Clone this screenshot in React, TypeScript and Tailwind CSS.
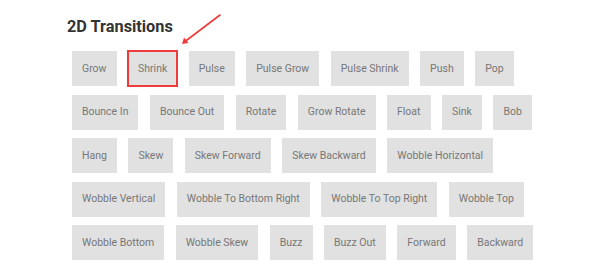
const rows: string[][] = [
  ["Grow", "Shrink", "Pulse", "Pulse Grow", "Pulse Shrink", "Push", "Pop"],
  ["Bounce In", "Bounce Out", "Rotate", "Grow Rotate", "Float", "Sink", "Bob"],
  ["Hang", "Skew", "Skew Forward", "Skew Backward", "Wobble Horizontal"],
  ["Wobble Vertical", "Wobble To Bottom Right", "Wobble To Top Right", "Wobble Top"],
  ["Wobble Bottom", "Wobble Skew", "Buzz", "Buzz Out", "Forward", "Backward"],
];

function Arrow() {
  return (
    <svg className="absolute left-[178px] top-[12px]" width="46" height="36" viewBox="0 0 46 36">
      <line x1="42" y1="3" x2="7" y2="29.5" stroke="#f03a3a" strokeWidth="1.6" strokeLinecap="round" />
      <path d="M4 32 L6 25.5 L10.5 31 Z" fill="#f03a3a" />
    </svg>
  );
}

export default function App() {
  return (
    <div className="relative h-[279px] w-[610px] overflow-hidden bg-white font-['Roboto',sans-serif]">
      <Arrow />
      <h2 className="pl-[67px] pt-[17px] text-[16.3px] font-bold leading-[19px] text-[#333]">
        2D Transitions
      </h2>
      <div className="ml-[72px] mt-[15px] flex flex-col gap-y-[8.5px]">
        {rows.map((row, i) => (
          <div key={i} className="flex gap-x-[11.5px]">
            {row.map((label) =>
              label === "Shrink" ? (
                <div
                  key={label}
                  className="-my-px -mx-px flex h-[37px] items-center border-2 border-[#ee3b3b] bg-[#e1e1e1] px-[9px] text-[10.5px] text-[#777]"
                >
                  {label}
                </div>
              ) : (
                <div
                  key={label}
                  className="flex h-[35px] items-center bg-[#e1e1e1] px-[10px] text-[10.5px] text-[#777]"
                >
                  {label}
                </div>
              ),
            )}
          </div>
        ))}
      </div>
    </div>
  );
}
